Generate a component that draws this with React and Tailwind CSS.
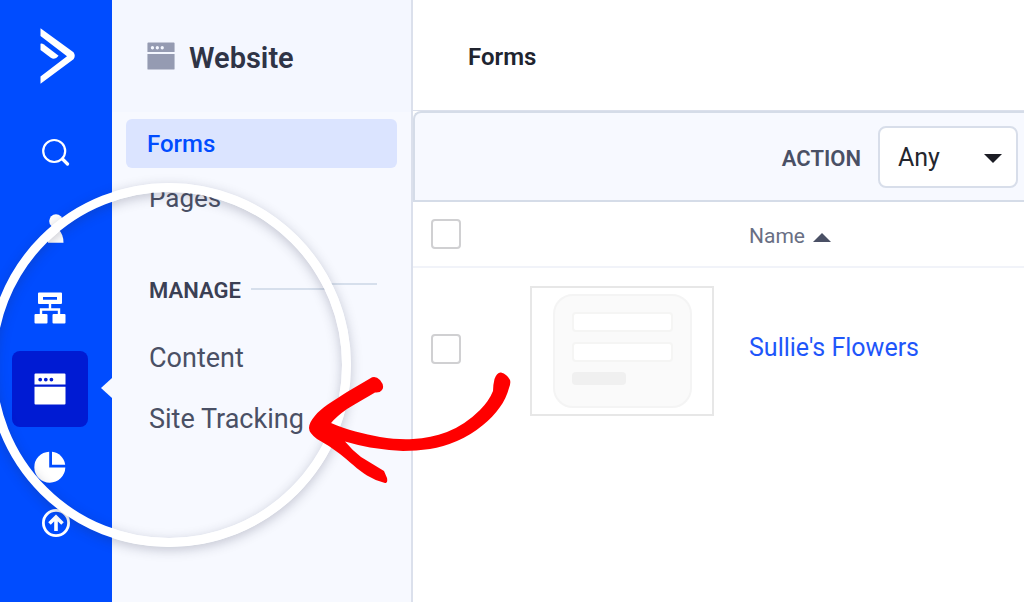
import React, { useState } from 'react';

function WindowIcon({ className }) {
  return (
    <svg viewBox="0 0 32 32" fill="currentColor" className={className} aria-hidden="true">
      <path
        fillRule="evenodd"
        d="M1.5 0.5h29q1 0 1 1V11.5h-31V1.5q0-1 1-1zM6.2 4.7a1.9 1.9 0 1 0 0 3.8a1.9 1.9 0 1 0 0-3.8zM11.8 4.7a1.9 1.9 0 1 0 0 3.8a1.9 1.9 0 1 0 0-3.8zM17.4 4.7a1.9 1.9 0 1 0 0 3.8a1.9 1.9 0 1 0 0-3.8z"
      />
      <path d="M0.5 13.7h31V30.5q0 1-1 1h-29q-1 0-1-1z" />
    </svg>
  );
}

function Rail() {
  return (
    <nav aria-label="Main" className="relative flex w-28 shrink-0 flex-col bg-[#004cff] text-white">
      <a href="#home" aria-label="Home" className="flex h-28 items-center justify-center pl-1">
        <svg viewBox="0 0 36 56" className="h-14 w-9" fill="currentColor">
          <path d="M0.5 0.3L33.5 24.3Q36 28 33.5 31.3L0.5 55.7V48.5L27 28.2L0.5 8z" />
          <path d="M0.5 15.8Q2 15.2 3.500 16.300L18.6 27.7Q15 32.5 10.8 29.700L0.5 22z" />
        </svg>
      </a>
      <button type="button" aria-label="Search" className="flex h-20 items-center justify-center">
        <svg viewBox="0 0 28 28" className="size-7" fill="none" stroke="currentColor" strokeLinecap="round">
          <circle cx="12.2" cy="13" r="11" strokeWidth="2.2" />
          <path d="M20.5 21L25.5 26" strokeWidth="3.2" />
        </svg>
      </button>
      <a href="#contacts" aria-label="Contacts" className="flex h-18 items-center justify-center">
        <svg viewBox="0 0 16 30" className="h-[30px] w-4" fill="currentColor">
          <circle cx="8" cy="8" r="6.8" />
          <path d="M5 16H10Q15.5 21 15.5 29.7H0V20z" />
        </svg>
      </a>
      <a href="#automations" aria-label="Automations" className="flex h-[87px] items-center justify-center pr-3">
        <svg viewBox="0 0 32 32" className="size-8">
          <path
            fill="currentColor"
            fillRule="evenodd"
            d="M5 0.500h22q1 0 1 1v9.500q0 1-1 1H5q-1 0-1-1V1.500q0-1 1-1zM9 5v2.700h14V5z"
          />
          <path d="M16 12v5M7 23v-5.500h18V23" fill="none" stroke="currentColor" strokeWidth="2.4" />
          <rect x="0.5" y="22" width="13" height="9.5" rx="1" fill="currentColor" />
          <rect x="18.5" y="22" width="13" height="9.5" rx="1" fill="currentColor" />
        </svg>
      </a>
      <a
        href="#website"
        aria-label="Website"
        aria-current="page"
        className="ml-3 flex size-[76px] items-center justify-center rounded-lg bg-[#001bd3]"
      >
        <WindowIcon className="size-8" />
      </a>
      <a href="#reports" aria-label="Reports" className="flex h-20 items-center justify-center pr-3">
        <svg viewBox="0 0 32 32" className="size-8" fill="currentColor">
          <path d="M15.2 0.7V16.6H31.3A15.5 15.5 0 1 1 15.2 0.7z" />
          <path d="M18 0.7A15 15 0 0 1 31.2 13.8H18z" />
        </svg>
      </a>
      <a href="#upgrade" aria-label="Upgrade" className="flex h-8 items-center justify-center">
        <svg viewBox="0 0 28 28" className="size-7" fill="none" stroke="currentColor">
          <circle cx="14" cy="14" r="12.6" strokeWidth="2.8" />
          <path d="M14 22V8M7.5 14.500L14 8L20.500 14.500" strokeWidth="3.6" />
        </svg>
      </a>
      <svg viewBox="0 0 11 20" className="absolute top-[378px] right-0 h-5 w-[11px]" fill="#f7f9ff" aria-hidden="true">
        <path d="M11 0V20L0 10z" />
      </svg>
    </nav>
  );
}

function Sidebar() {
  return (
    <aside className="w-[301px] shrink-0 border-r-2 border-[#dbe0ec] bg-[#f7f9ff] text-[#4a5065]">
      <header className="flex h-28 items-center gap-[14px] bg-[#f4f7ff] pl-[35px]">
        <WindowIcon className="size-7 text-[#959bb2]" />
        <h2 className="pt-1 text-[29px] leading-8 font-semibold text-[#2f3446]">Website</h2>
      </header>
      <nav aria-label="Website" className="flex flex-col px-[14px] pt-[7px]">
        <a href="#forms" className="flex h-[49px] items-center rounded-md bg-[#dbe4ff] px-[21px] text-2xl font-medium text-[#004cff]">
          Forms
        </a>
        <a href="#pages" className="mt-[14px] px-[23px] text-[26px] leading-8">Pages</a>
        <div className="mt-[59px] flex h-8 items-center pr-[20px] pl-[23px]">
          <h3 className="mr-2 w-[94px] pt-[3px] text-[22px] leading-8 font-semibold text-[#3b4054]">MANAGE</h3>
          <span className="h-[2px] w-20 bg-[#d6dfec]" />
          <span className="mb-[10px] h-[2px] flex-1 bg-[#d6dfec]" />
        </div>
        <a href="#content" className="mt-[37px] px-[23px] text-[27px] leading-8">Content</a>
        <a href="#tracking" className="mt-[29px] px-[23px] text-[27px] leading-8">Site Tracking</a>
      </nav>
    </aside>
  );
}

function Checkbox({ label }) {
  const [checked, setChecked] = useState(false);
  return (
    <input
      type="checkbox"
      aria-label={label}
      checked={checked}
      onChange={(e) => setChecked(e.target.checked)}
      className="block size-[30px] appearance-none rounded border-2 border-[#d0d0d2] bg-white checked:bg-[#004cff]"
    />
  );
}

function FormPreview() {
  return (
    <div className="flex h-[130px] w-[184px] items-center justify-center border-2 border-[#e7e7e7] bg-white">
      <div className="flex h-[114px] w-[139px] flex-col rounded-[20px] border-2 border-[#f4f4f4] bg-[#fafafa] px-[17px] pt-4">
        <div className="h-5 rounded border-2 border-[#f5f5f4] bg-white" />
        <div className="mt-[10px] h-5 rounded border-2 border-[#f5f5f4] bg-white" />
        <div className="mt-[10px] h-[13px] w-[54px] rounded bg-[#f0f0f0]" />
      </div>
    </div>
  );
}

function FormsPage() {
  const [action, setAction] = useState('Any');

  return (
    <main className="min-w-0 flex-1 bg-white">
      <header className="flex h-[111px] items-center border-b border-[#dbe0ec] pt-1 pl-[55px]">
        <h1 className="text-2xl font-semibold text-[#20242f]">Forms</h1>
      </header>
      <div className="flex h-[91px] items-center justify-end gap-[17px] rounded-tl-lg border-y-2 border-l-2 border-[#d5dce8] bg-[#f7f9ff] pr-[6px]">
        <label htmlFor="action" className="pt-1 text-[22px] font-semibold text-[#4a5065]">ACTION</label>
        <div className="relative">
          <select
            id="action"
            value={action}
            onChange={(e) => setAction(e.target.value)}
            className="block h-[62px] w-[140px] appearance-none rounded-lg border-2 border-[#d8deea] bg-white pt-[3px] pl-[18px] text-[25px] text-[#24262e]"
          >
            <option>Any</option>
          </select>
          <svg viewBox="0 0 18 9" className="pointer-events-none absolute top-7 right-4 h-[9px] w-[18px]" fill="#1b1c24">
            <path d="M0 0H18L9 9z" />
          </svg>
        </div>
      </div>
      <table className="w-full table-fixed text-left">
        <thead>
          <tr className="h-[65px] border-b-2 border-[#f1f3f9]">
            <th className="w-[117px] pl-[18px]"><Checkbox label="Select all forms" /></th>
            <th className="w-[219px]" aria-label="Preview" />
            <th className="pt-[3px] font-normal text-[#696f84]">
              <button type="button" className="flex items-center gap-2 text-[21px] leading-7">
                Name
                <svg viewBox="0 0 18 9" className="mt-1 h-[9px] w-[18px]" fill="#4a5065" aria-hidden="true">
                  <path d="M0 9H18L9 0z" />
                </svg>
              </button>
            </th>
          </tr>
        </thead>
        <tbody>
          <tr className="h-[166px]">
            <td className="pb-[3px] pl-[18px]"><Checkbox label="Select Sullie's Flowers" /></td>
            <td><FormPreview /></td>
            <td className="pb-[6px]"><a href="#sullie" className="text-[25px] text-[#1f56fa]">Sullie's Flowers</a></td>
          </tr>
        </tbody>
      </table>
    </main>
  );
}

function Highlight() {
  return (
    <div className="pointer-events-none absolute inset-0 overflow-hidden" aria-hidden="true">
      <div className="absolute top-[183px] -left-[13px] size-[364px] rounded-full border-[9px] border-white shadow-[0_3px_12px_rgba(40,45,70,0.25),inset_0_3px_12px_rgba(40,45,70,0.25)]" />
      <svg viewBox="309 372 202 112" className="absolute top-[372px] left-[309px] h-28 w-[202px]" fill="#ff0000">
        <path d="M309 428C309 421 318 411 327 405C334 400 341 396 347 392L370 378.5Q375 375 380 380Q385 386 382 390Q380 393 375 392.5C367 397 357 403 347 409Q337 416 331 423C347 430 364 434 380 437C392 439 403 439.500 413 439C425 438.500 436 436 447 432Q465 425 480 410Q489 401 493 391Q493 385 494.500 379Q497 372 501 372.500Q507 374 510 380Q511 383 509 388Q506 399 500 407Q493 417 483 425Q471 435 457 441Q443 447 430 449Q416 451 403 451Q386 450 370 447.500Q357 445 345 441.500Q352 450 361 457L384 471L387 478Q388 483 385 483Q376 481 367 475.500C358 470 349 461 340 454Q330 446 317 439Q309 433 309 428z" />
      </svg>
    </div>
  );
}

function App() {
  return (
    <div className="relative flex min-h-screen font-[Roboto,'Open_Sans',sans-serif]">
      <Rail />
      <Sidebar />
      <FormsPage />
      <Highlight />
    </div>
  );
}

export default App;
